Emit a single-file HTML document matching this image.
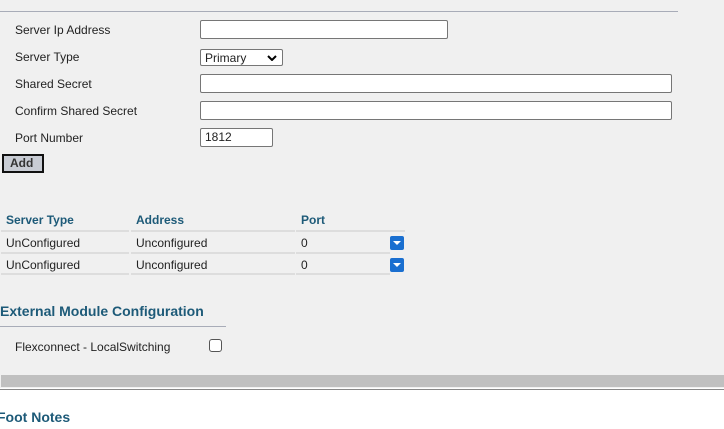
<!DOCTYPE html>
<html><head><style>
body{margin:0;width:724px;height:429px;background:#fff;font-family:"Liberation Sans",sans-serif;font-size:12px;color:#222;position:relative;overflow:hidden}
.bg{position:absolute;left:0;top:0;width:724px;height:388px;background:#f0f0f0}
.a{position:absolute;white-space:nowrap}
.in{position:absolute;background:#fff;border:1px solid #767676;border-radius:2px;box-sizing:border-box;height:19px}
.h{color:#1d5a78;font-weight:bold}
.ln{position:absolute;height:2px;background:#ddd}
.dd{position:absolute;width:14px;height:14px;background:#1a6fd0;border-radius:2px}
.dd:after{content:"";position:absolute;left:3px;top:5px;border-left:4px solid transparent;border-right:4px solid transparent;border-top:4px solid #fff}
</style></head><body>
<div class="bg"></div>
<div class="a" style="left:0;top:11px;width:678px;height:1px;background:#a8acb8"></div>
<div class="a" style="left:15px;top:23px">Server Ip Address</div>
<div class="in" style="left:200px;top:20px;width:248px"></div>
<div class="a" style="left:15px;top:50px">Server Type</div>
<div class="in" style="left:200px;top:49px;width:83px;height:17px;padding:2px 4px;line-height:12px">Primary<svg style="position:absolute;right:5px;top:5px" width="10" height="6"><path d="M1 1L5 5L9 1" stroke="#000" stroke-width="2" fill="none"/></svg></div>
<div class="a" style="left:15px;top:77px">Shared Secret</div>
<div class="in" style="left:200px;top:74px;width:472px"></div>
<div class="a" style="left:15px;top:104px">Confirm Shared Secret</div>
<div class="in" style="left:200px;top:101px;width:472px"></div>
<div class="a" style="left:15px;top:131px">Port Number</div>
<div class="in" style="left:200px;top:128px;width:73px;padding:2px 4px;line-height:13px">1812</div>
<div class="a" style="left:2px;top:154px;width:32px;height:15px;border:2px solid #111;background:#c8ccd4;font-weight:bold;line-height:15px;padding-left:6px;color:#333">Add</div>

<div class="a h" style="left:6px;top:213px">Server Type</div>
<div class="a h" style="left:136px;top:213px">Address</div>
<div class="a h" style="left:301px;top:213px">Port</div>
<div class="ln" style="left:1px;top:230px;width:128px"></div>
<div class="ln" style="left:131px;top:230px;width:164px"></div>
<div class="ln" style="left:296px;top:230px;width:109px"></div>
<div class="a" style="left:6px;top:236px">UnConfigured</div>
<div class="a" style="left:136px;top:236px">Unconfigured</div>
<div class="a" style="left:301px;top:236px">0</div>
<div class="dd" style="left:390px;top:236px"></div>
<div class="ln" style="left:1px;top:252px;width:128px"></div>
<div class="ln" style="left:131px;top:252px;width:164px"></div>
<div class="ln" style="left:296px;top:252px;width:94px"></div>
<div class="a" style="left:6px;top:258px">UnConfigured</div>
<div class="a" style="left:136px;top:258px">Unconfigured</div>
<div class="a" style="left:301px;top:258px">0</div>
<div class="dd" style="left:390px;top:258px"></div>
<div class="ln" style="left:1px;top:273px;width:128px"></div>
<div class="ln" style="left:131px;top:273px;width:164px"></div>
<div class="ln" style="left:296px;top:273px;width:94px"></div>

<div class="a h" style="left:0;top:303px;font-size:14px">External Module Configuration</div>
<div class="a" style="left:0;top:326px;width:226px;height:1px;background:#a8acb8"></div>
<div class="a" style="left:15px;top:340px">Flexconnect - LocalSwitching</div>
<div class="a" style="left:209px;top:339px;width:13px;height:13px;border:1px solid #555;border-radius:3px;background:#fff;box-sizing:border-box"></div>
<div class="a" style="left:1px;top:375px;width:723px;height:12px;background:#c0c0c0"></div>
<div class="a" style="left:0;top:389px;width:724px;height:1px;background:#888"></div>
<div class="a h" style="left:-3px;top:409px;font-size:14px">Foot Notes</div>
</body></html>
